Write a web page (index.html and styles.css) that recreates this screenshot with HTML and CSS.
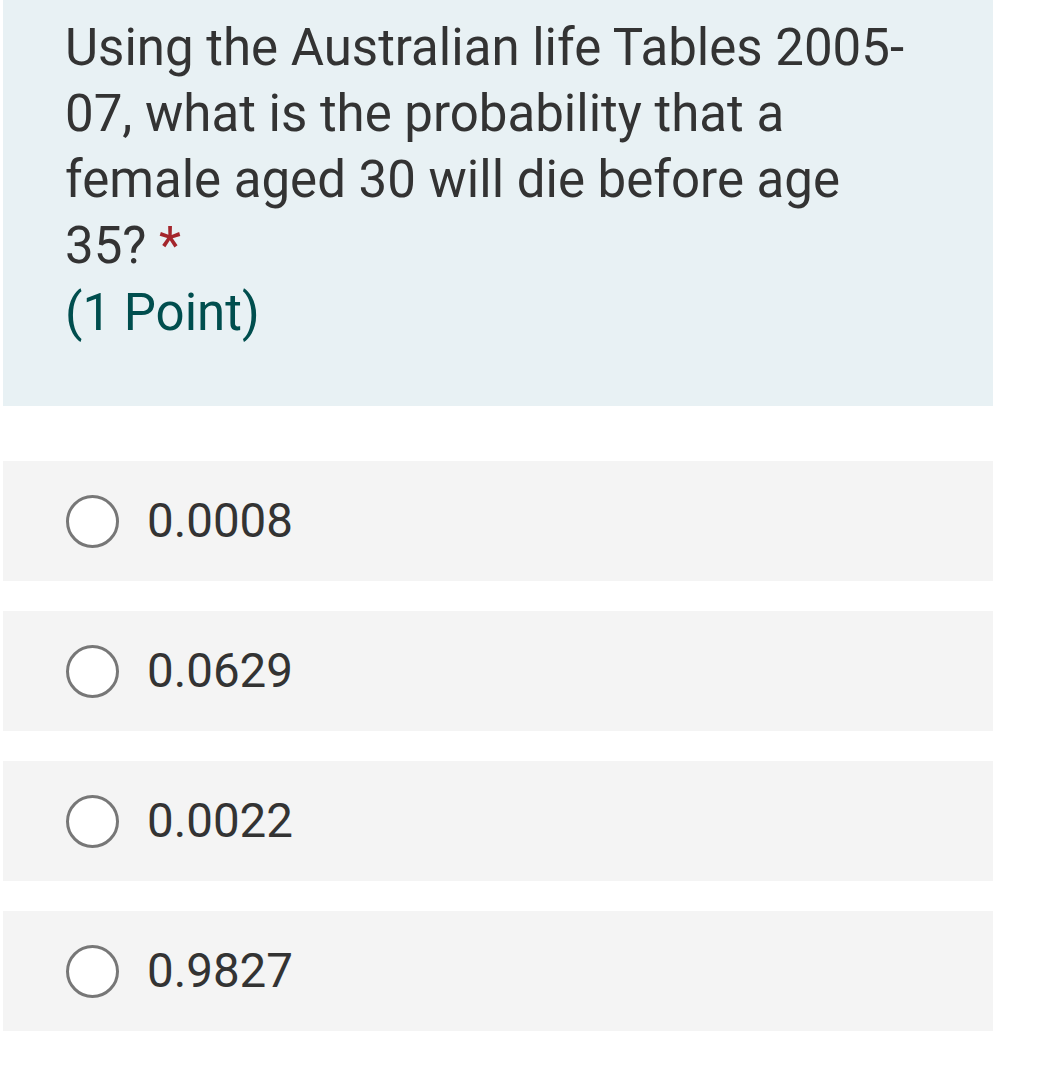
FILE: index.html
```html
<!DOCTYPE html>
<html>
<head>
<meta charset="utf-8">
<link rel="stylesheet" href="styles.css">
</head>
<body>
<div class="page">
  <div class="question">
    <div class="qtext">Using the Australian life Tables 2005-07, what is the probability that a female aged 30 will die before age 35? <span class="req">*</span></div>
    <div class="points">(1 Point)</div>
  </div>
  <div class="options">
    <div class="option"><span class="radio"></span><span class="label">0.0008</span></div>
    <div class="option"><span class="radio"></span><span class="label">0.0629</span></div>
    <div class="option"><span class="radio"></span><span class="label">0.0022</span></div>
    <div class="option"><span class="radio"></span><span class="label">0.9827</span></div>
  </div>
</div>
</body>
</html>
```

FILE: styles.css
```css
html, body {
  margin: 0;
  padding: 0;
  background: #ffffff;
}
body {
  font-family: Roboto, "Noto Sans", sans-serif;
  color: #333333;
}
.page {
  margin-left: 3px;
  width: 990px;
}
.question {
  background: #e8f1f4;
  padding: 15px 40px 60px 62px;
  height: 331px;
}
.qtext {
  font-size: 51px;
  line-height: 66px;
  max-width: 860px;
  color: #333333;
}
.req {
  color: #a4262c;
}
.points {
  font-size: 51px;
  line-height: 67px;
  color: #004e4e;
}
.options {
  margin-top: 55px;
  display: flex;
  flex-direction: column;
  gap: 30px;
}
.option {
  height: 120px;
  background: #f4f4f4;
  display: flex;
  align-items: center;
  padding-left: 63px;
}
.radio {
  box-sizing: border-box;
  width: 53px;
  height: 53px;
  border: 3px solid #777777;
  border-radius: 50%;
  background: #ffffff;
  flex: none;
}
.label {
  font-size: 47.5px;
  margin-left: 28px;
  color: #333333;
}
```
